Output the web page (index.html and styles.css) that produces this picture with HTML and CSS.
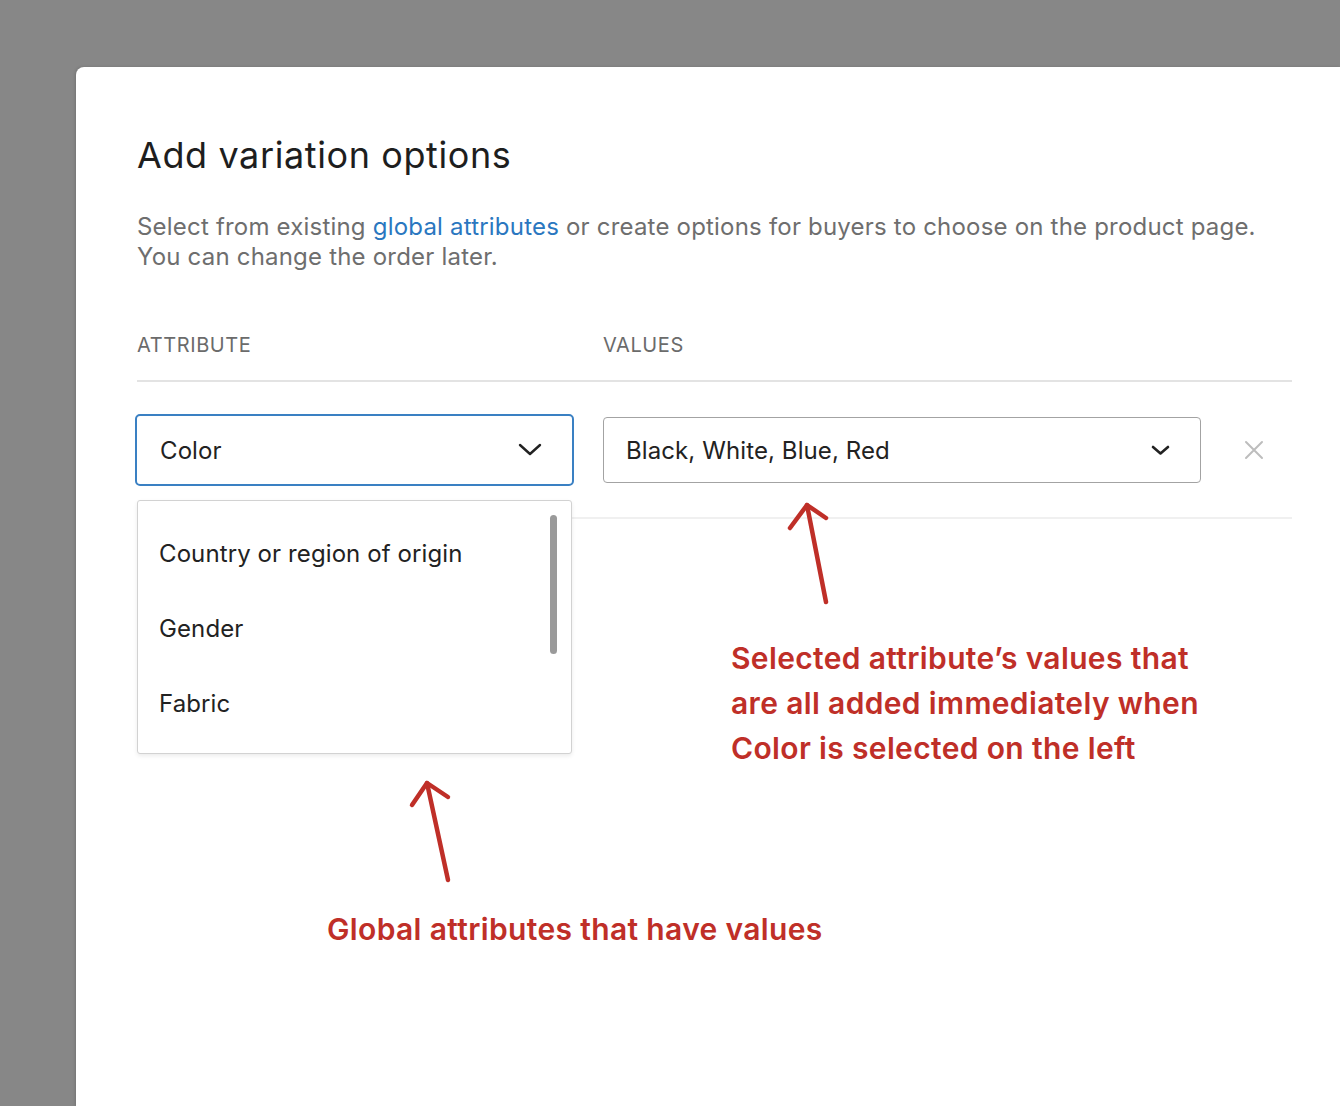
FILE: index.html
```html
<!DOCTYPE html>
<html lang="en">
<head>
<meta charset="utf-8">
<title>Add variation options</title>
<link rel="stylesheet" href="styles.css">
</head>
<body>
<div class="modal">
  <h1 class="title">Add variation options</h1>
  <p class="desc">Select from existing <a class="link" href="#">global attributes</a> or create options for buyers to choose on the product page.<br>You can change the order later.</p>

  <div class="table">
    <div class="head">
      <div class="col-attr hlabel">ATTRIBUTE</div>
      <div class="col-val hlabel">VALUES</div>
    </div>
    <div class="row">
      <div class="col-attr attr-wrap">
        <div class="select select-focus">
          <span class="sel-text">Color</span>
          <svg class="chev-lg" width="24" height="14" viewBox="0 0 24 14"><path d="M2 2 L12 11 L22 2" fill="none" stroke="#222" stroke-width="2.4" stroke-linecap="round" stroke-linejoin="round"/></svg>
        </div>
        <div class="menu">
          <div class="menu-item">Country or region of origin</div>
          <div class="menu-item">Gender</div>
          <div class="menu-item">Fabric</div>
          <div class="scroll-thumb"></div>
        </div>
      </div>
      <div class="col-val">
        <div class="select select-val">
          <span class="sel-text">Black, White, Blue, Red</span>
          <svg class="chev-sm" width="19" height="11" viewBox="0 0 19 11"><path d="M2 2 L9.5 8.5 L17 2" fill="none" stroke="#222" stroke-width="2.6" stroke-linecap="round" stroke-linejoin="round"/></svg>
        </div>
      </div>
      <div class="col-x">
        <svg width="20" height="20" viewBox="0 0 20 20"><path d="M2 2 L18 18 M18 2 L2 18" fill="none" stroke="#bdbdbd" stroke-width="2" stroke-linecap="round"/></svg>
      </div>
    </div>
  </div>
</div>

<svg class="arrows" width="1340" height="1106" viewBox="0 0 1340 1106">
  <g fill="none" stroke="#bf2f28" stroke-width="4.5" stroke-linecap="round" stroke-linejoin="round">
    <path d="M826 602 L807 505"/>
    <path d="M790 528 L807 505 L826 518"/>
    <path d="M448 880 L427 783"/>
    <path d="M412 805 L427 783 L448 797"/>
  </g>
</svg>

<div class="note note-right">Selected attribute’s values that<br>are all added immediately when<br>Color is selected on the left</div>
<div class="note note-left">Global attributes that have values</div>
</body>
</html>
```

FILE: styles.css
```css
* { box-sizing: border-box; }

html, body {
  margin: 0;
  padding: 0;
}

body {
  width: 1340px;
  height: 1106px;
  overflow: hidden;
  background: #878787;
  font-family: Inter, "Noto Sans", "Liberation Sans", sans-serif;
  position: relative;
  padding: 67px 0 0 76px;
}

.modal {
  background: #ffffff;
  height: 1039px;
  border-top-left-radius: 8px;
  padding: 66px 48px 0 61px;
  box-shadow: -1px 0 3px rgba(0,0,0,0.15);
}

.title {
  margin: 0;
  font-size: 36px;
  line-height: 44px;
  font-weight: 400;
  color: #1e1e1e;
  letter-spacing: 0.6px;
}

.desc {
  margin: 35px 0 0 0;
  font-size: 24px;
  line-height: 30px;
  color: #6e6e6e;
  letter-spacing: 0.2px;
}

.link {
  color: #2a77c0;
  text-decoration: none;
}

.table {
  margin-top: 61px;
  width: 1155px;
}

.head {
  display: flex;
  padding-bottom: 23px;
  border-bottom: 2px solid #e3e3e3;
}

.hlabel {
  font-size: 20px;
  line-height: 24px;
  color: #6b6b6b;
  letter-spacing: 0.6px;
}

.col-attr {
  width: 437px;
  flex: none;
}

.col-val {
  width: 598px;
  flex: none;
  margin-left: 29px;
}

.row {
  display: flex;
  align-items: center;
  padding: 32px 0 31px 0;
  border-bottom: 2px solid #f0f0f0;
}

.attr-wrap {
  position: relative;
  margin-left: -2px;
  width: 439px;
}

.select {
  display: flex;
  align-items: center;
  justify-content: space-between;
  background: #fff;
}

.select-focus {
  height: 72px;
  border: 2px solid #3a80c3;
  border-radius: 5px;
  padding: 0 30px 0 23px;
}

.select-val {
  height: 66px;
  border: 1.5px solid #a3a3a3;
  border-radius: 4px;
  padding: 0 30px 0 22px;
}

.sel-text {
  font-size: 24px;
  color: #222;
  letter-spacing: 0.1px;
}

.col-x {
  flex: none;
  margin-left: 43px;
  display: flex;
  align-items: center;
}

.menu {
  position: absolute;
  top: 86px;
  left: 2px;
  width: 435px;
  height: 254px;
  background: #fff;
  border: 1.5px solid #d2d2d2;
  border-radius: 3px;
  box-shadow: 0 2px 4px rgba(0,0,0,0.08);
  padding: 15px 0 13px 0;
  z-index: 2;
}

.menu-item {
  height: 75px;
  display: flex;
  align-items: center;
  padding-left: 21px;
  font-size: 24px;
  color: #222;
  letter-spacing: 0.1px;
}

.scroll-thumb {
  position: absolute;
  top: 14px;
  right: 14px;
  width: 7px;
  height: 139px;
  border-radius: 4px;
  background: #9a9a9a;
}

.arrows {
  position: absolute;
  top: 0;
  left: 0;
  z-index: 3;
}

.note {
  position: absolute;
  z-index: 3;
  color: #bf2f28;
  font-size: 30px;
  font-weight: 600;
  line-height: 45px;
  letter-spacing: 0.35px;
}

.note-right {
  left: 731px;
  top: 636px;
}

.note-left {
  left: 327px;
  top: 907px;
}
```
